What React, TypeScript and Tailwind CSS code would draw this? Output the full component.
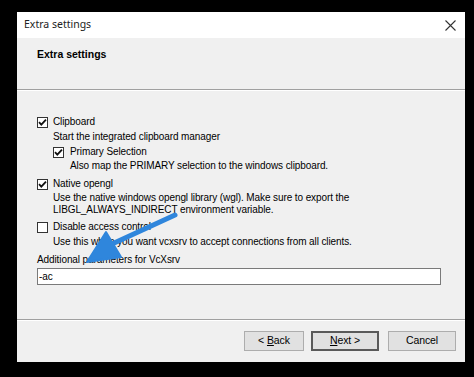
import React from "react";

function Check({ checked }: { checked: boolean }) {
  return (
    <div className="w-[11px] h-[11px] border border-[#333] bg-white flex items-center justify-center shrink-0">
      {checked && (
        <svg width="9" height="9" viewBox="0 0 9 9">
          <path d="M1 4.2 L3.3 6.6 L8 1.6" stroke="#111" strokeWidth="1.8" fill="none" />
        </svg>
      )}
    </div>
  );
}

export default function App() {
  return (
    <div className="w-[474px] h-[377px] bg-black pt-[12px] pl-[17px] overflow-hidden font-['Liberation_Sans',Arial,sans-serif] text-[10px] tracking-[-0.1px] text-black">
      <div className="relative w-[448px] h-[350px] bg-[#f0f0f0] flex flex-col">
        {/* title bar */}
        <div className="h-[26px] bg-white flex items-center justify-between pl-[7px] pr-[9px] font-['Noto_Sans',sans-serif] text-[10.5px] tracking-normal text-[#222]">
          <span>Extra settings</span>
          <svg width="11" height="11" viewBox="0 0 11 11">
            <path d="M0.5 0.5 L10.5 10.5 M10.5 0.5 L0.5 10.5" stroke="#333" strokeWidth="1.1" />
          </svg>
        </div>

        {/* header */}
        <div className="h-[52px] pl-[20px] pt-[10px] border-b border-[#a0a0a0]">
          <div className="font-bold text-[10.5px] tracking-normal leading-[12px]">Extra settings</div>
        </div>
        <div className="h-px bg-white" />

        {/* body */}
        <div className="h-[229px] pl-[20px] pt-[25px] leading-[12px] border-b border-[#a0a0a0]">
          <div className="flex items-center gap-[5px] h-[12px]">
            <Check checked />
            <span>Clipboard</span>
          </div>
          <div className="ml-[16px] mt-[3px]">Start the integrated clipboard manager</div>
          <div className="flex items-center gap-[6px] h-[12px] ml-[16px] mt-[3px]">
            <Check checked />
            <span>Primary Selection</span>
          </div>
          <div className="ml-[33px] mt-[2px]">Also map the PRIMARY selection to the windows clipboard.</div>

          <div className="flex items-center gap-[5px] h-[12px] mt-[6px]">
            <Check checked />
            <span>Native opengl</span>
          </div>
          <div className="ml-[16px] mt-[2px]">
            <div>Use the native windows opengl library (wgl). Make sure to export the</div>
            <div>LIBGL_ALWAYS_INDIRECT environment variable.</div>
          </div>

          <div className="flex items-center gap-[5px] h-[12px] mt-[5px]">
            <Check checked={false} />
            <span>Disable access control</span>
          </div>
          <div className="ml-[16px] mt-[3px]">Use this when you want vcxsrv to accept connections from all clients.</div>

          <div className="mt-[6px]">Additional parameters for VcXsrv</div>
          <div className="mt-[2px] w-[404px] h-[17px] bg-white border border-[#7a7a7a] flex items-center pl-[1px]">
            -ac
          </div>
        </div>
        <div className="h-px bg-white" />

        {/* buttons */}
        <div className="flex justify-end pr-[9px] pt-[10px]">
          <button className="w-[60px] h-[20px] bg-[#e1e1e1] border border-[#adadad] text-[10.5px]">
            &lt; <u>B</u>ack
          </button>
          <button className="w-[68px] h-[20px] ml-[7px] bg-[#e1e1e1] border-2 border-[#5a5a5a] text-[10.5px]">
            <u>N</u>ext &gt;
          </button>
          <button className="w-[68px] h-[20px] ml-[9px] bg-[#e1e1e1] border border-[#adadad] text-[10.5px]">
            Cancel
          </button>
        </div>

        {/* annotation arrow */}
        <svg className="absolute left-0 top-0 pointer-events-none" width="448" height="350" viewBox="0 0 448 350">
          <g transform="translate(-17,-12)">
            <path d="M175 215 L112 244" stroke="#2f86dc" strokeWidth="5" strokeLinecap="round" />
            <path d="M87 262 L106 232 L121 257 Z" fill="#2f86dc" stroke="#2f86dc" strokeWidth="2" strokeLinejoin="round" />
          </g>
        </svg>
      </div>
    </div>
  );
}
